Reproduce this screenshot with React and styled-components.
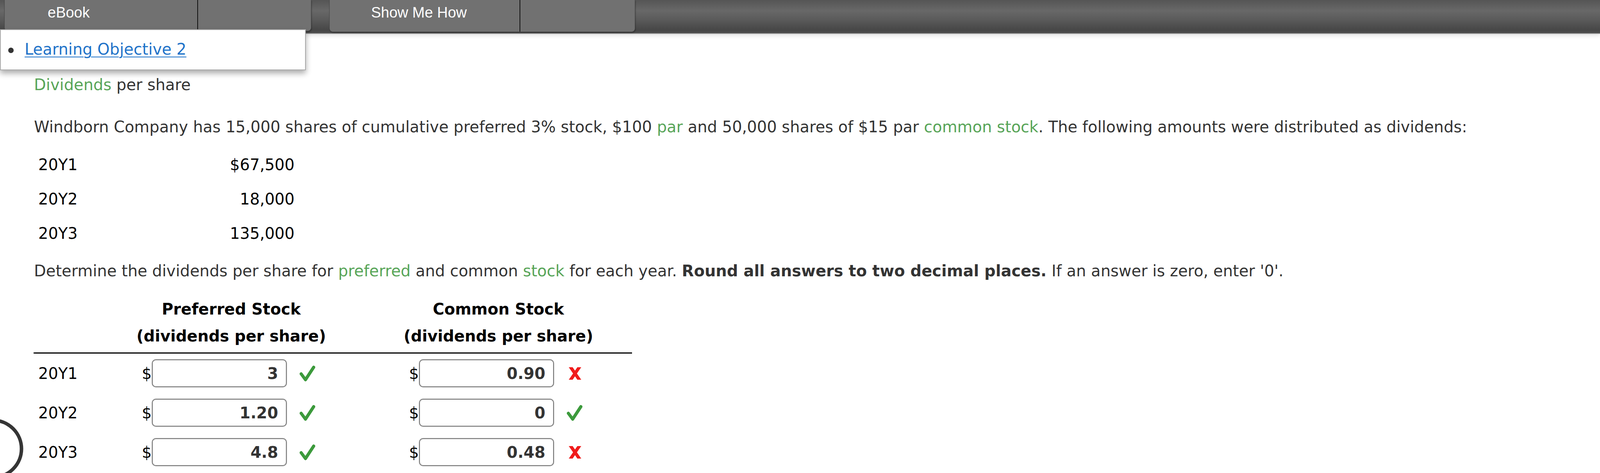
import React from "react";
import styled, { createGlobalStyle } from "styled-components";

/* page reset */
const Global = createGlobalStyle`
    html, body {
        margin: 0;
        padding: 0;
        background: #fff;
        overflow: hidden;
    }
    body {
        font-family: "DejaVu Sans", Verdana, sans-serif;
        color: #333;
    }
`;

const Page = styled.div`
    position: relative;
    width: 100%;
    height: 100vh;
    overflow: hidden;
`;

/* tool bar */
const Bar = styled.div`
    display: flex;
    align-items: flex-start;
    height: 85px;
    padding-left: 11px;
    background: linear-gradient(#555 0%, #686868 32%, #5a5a5a 60%, #474747 90%, #4d4d4d 100%);
    border-bottom: 2px solid #9d9d9d;
    box-shadow: 0 4px 10px rgba(0, 0, 0, 0.12);
`;

const Tab = styled.div`
    display: flex;
    width: ${p => p.$w}px;
    height: ${p => p.$h}px;
    margin-left: ${p => p.$gap || 0}px;
    background: #717171;
    border: 1px solid #4a4a4a;
    border-top: none;
    border-radius: 0 0 9px 9px;
    box-sizing: border-box;
    box-shadow: 1px 2px 3px rgba(0, 0, 0, 0.35);
`;

const TabLabel = styled.div`
    width: ${p => p.$w}px;
    height: 100%;
    box-sizing: border-box;
    padding: 10px 0 0 ${p => p.$pad}px;
    border-right: 2px solid #111;
    font-family: "Liberation Sans", Arial, sans-serif;
    font-size: 38px;
    line-height: 44px;
    color: #fff;
`;

/* learning objective dropdown */
const Objective = styled.div`
    position: absolute;
    top: 75px;
    left: 0;
    width: 783px;
    height: 105px;
    box-sizing: border-box;
    display: flex;
    align-items: center;
    gap: 28px;
    padding: 0 0 4px 19px;
    background: #fff;
    border: 2px solid #a9a9a9;
    box-shadow: 0 8px 14px rgba(0, 0, 0, 0.33);
`;

const Bullet = styled.span`
    width: 14px;
    height: 14px;
    border-radius: 50%;
    background: #333;
    margin-top: 6px;
`;

const Link = styled.a`
    font-size: 40px;
    color: #1f73c9;
    text-decoration: underline;
    text-underline-offset: 5px;
    text-decoration-thickness: 2px;
`;

/* content */
const Content = styled.div`
    padding: 106px 0 0 86px;
    font-size: 40px;
    line-height: 48px;
`;

const Para = styled.p`
    margin: ${p => p.$top || 0}px 0 0 1px;
    white-space: nowrap;
`;

const Term = styled.span`
    color: #58a558;
`;

const Amounts = styled.div`
    margin-top: 29px;
    padding-left: 12px;
    display: grid;
    grid-template-columns: 300px 356px;
    color: #000;
`;

const Cell = styled.div`
    height: 88px;
    display: flex;
    align-items: center;
    justify-content: ${p => (p.$right ? "flex-end" : "flex-start")};
`;

const Answers = styled.div`
    margin-top: 40px;
    width: 1532px;
    color: #000;
`;

const cols = "260px 492px 192px 492px 96px";

const HeadRow = styled.div`
    display: grid;
    grid-template-columns: ${cols};
    padding-bottom: 7px;
    border-bottom: 3px solid #000;
`;

const HeadCell = styled.div`
    display: flex;
    flex-direction: column;
    align-items: center;
    font-weight: bold;
    line-height: 69px;
    white-space: nowrap;
`;

const Row = styled.div`
    display: grid;
    grid-template-columns: ${cols};
    height: 101px;
    align-items: center;
`;

const Year = styled.div`
    padding-left: 12px;
`;

const Answer = styled.div`
    display: flex;
    align-items: center;
    padding-left: 17px;
`;

const Dollar = styled.span`
    width: 26px;
`;

const Field = styled.input`
    width: 345px;
    height: 71px;
    box-sizing: border-box;
    padding: 0 20px 0 0;
    border: 2px solid #6f6f6f;
    border-radius: 10px;
    box-shadow: 0 0 3px rgba(0, 0, 0, 0.35);
    font-family: "DejaVu Sans", Verdana, sans-serif;
    font-size: 40px;
    font-weight: bold;
    color: #333;
    text-align: right;
    background: #fff;
    outline: none;
`;

const Mark = styled.span`
    display: flex;
    margin-left: ${p => (p.$ok ? 33 : 37)}px;
`;

/* floating help button, only its right part shows */
const Ring = styled.svg`
    position: absolute;
    left: 0;
    top: 1062px;
    width: 80px;
    height: 150px;
`;

const Check = () => (
    <svg width="40" height="42" viewBox="0 0 40 42">
        <path d="M4 22 L15 37 L36 5" fill="none" stroke="#3c9a3c" strokeWidth="8" strokeLinecap="round" strokeLinejoin="round" />
    </svg>
);

const Cross = () => (
    <svg width="34" height="34" viewBox="0 0 34 34">
        <path d="M1 1 H11 L33 33 H23 Z M23 1 H33 L11 33 H1 Z" fill="#f01c1c" />
    </svg>
);

const amounts = [
    ["20Y1", "$67,500"],
    ["20Y2", "18,000"],
    ["20Y3", "135,000"],
];

const answers = [
    { year: "20Y1", pref: "3", prefOk: true, common: "0.90", commonOk: false },
    { year: "20Y2", pref: "1.20", prefOk: true, common: "0", commonOk: true },
    { year: "20Y3", pref: "4.8", prefOk: true, common: "0.48", commonOk: false },
];

const AnswerCell = ({ value, ok }) => (
    <Answer>
        <Dollar>$</Dollar>
        <Field readOnly value={value} />
        <Mark $ok={ok}>{ok ? <Check /> : <Cross />}</Mark>
    </Answer>
);

export default function App() {
    return (
        <Page>
            <Global />
            <Bar>
                <Tab $w={786} $h={80}>
                    <TabLabel $w={495} $pad={110}>eBook</TabLabel>
                </Tab>
                <Tab $w={783} $h={82} $gap={46}>
                    <TabLabel $w={488} $pad={106}>Show Me How</TabLabel>
                </Tab>
            </Bar>

            <Content>
                <Para $top={0}>
                    <Term>Dividends</Term> per share
                </Para>
                <Para $top={60}>
                    Windborn Company has 15,000 shares of cumulative preferred 3% stock, $100 <Term>par</Term> and 50,000 shares of $15 par <Term>common stock</Term>. The following amounts were distributed as dividends:
                </Para>

                <Amounts>
                    {amounts.map(([y, v]) => (
                        <React.Fragment key={y}>
                            <Cell>{y}</Cell>
                            <Cell $right>{v}</Cell>
                        </React.Fragment>
                    ))}
                </Amounts>

                <Para $top={28}>
                    Determine the dividends per share for <Term>preferred</Term> and common <Term>stock</Term> for each year. <b>Round all answers to two decimal places.</b> If an answer is zero, enter '0'.
                </Para>

                <Answers>
                    <HeadRow>
                        <div />
                        <HeadCell>
                            <span>Preferred Stock</span>
                            <span>(dividends per share)</span>
                        </HeadCell>
                        <div />
                        <HeadCell>
                            <span>Common Stock</span>
                            <span>(dividends per share)</span>
                        </HeadCell>
                        <div />
                    </HeadRow>
                    {answers.map(a => (
                        <Row key={a.year}>
                            <Year>{a.year}</Year>
                            <AnswerCell value={a.pref} ok={a.prefOk} />
                            <div />
                            <AnswerCell value={a.common} ok={a.commonOk} />
                            <div />
                        </Row>
                    ))}
                </Answers>
            </Content>

            <Objective>
                <Bullet />
                <Link href="#">Learning Objective 2</Link>
            </Objective>
            <Ring viewBox="0 0 80 150">
                <circle cx="-18" cy="88" r="73" fill="none" stroke="#353535" strokeWidth="9" />
            </Ring>
        </Page>
    );
}
